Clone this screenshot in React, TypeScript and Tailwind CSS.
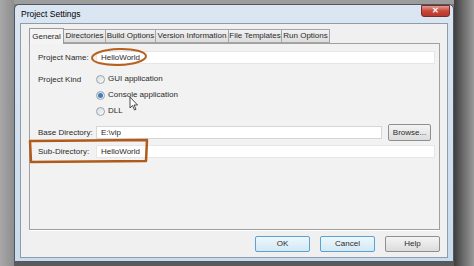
import React from "react";

const font = { fontFamily: '"Liberation Sans", Arial, sans-serif' };

function Radio({ checked, label }: { checked?: boolean; label: string }) {
  return (
    <div className="flex items-center h-[16px]">
      <div className="w-[9px] h-[9px] rounded-full border border-[#9aa4ae] bg-gradient-to-br from-[#d8dde2] to-[#f8f8f8] flex items-center justify-center">
        {checked && <div className="w-[5px] h-[5px] rounded-full bg-[#3d7fc1]" />}
      </div>
      <span className="ml-[3px] text-[8px] text-[#2a2a2a]">{label}</span>
    </div>
  );
}

function Tab({ label, w, active }: { label: string; w: number; active?: boolean }) {
  return (
    <div
      style={{ width: w }}
      className={
        active
          ? "h-[16px] -mb-px border border-b-0 border-[#9a9a9a] bg-[#f4f4f4] text-[8px] text-[#2a2a2a] flex items-center justify-center relative z-10"
          : "h-[14px] border border-l-0 border-[#a5a5a5] bg-gradient-to-b from-[#f2f2f2] to-[#dcdcdc] text-[8px] text-[#2a2a2a] flex items-center justify-center"
      }
    >
      {label}
    </div>
  );
}

function Btn({ label, focus }: { label: string; focus?: boolean }) {
  return (
    <div
      className={
        "w-[55px] h-[16px] rounded-[2px] border text-[8px] text-[#2a2a2a] flex items-center justify-center " +
        (focus
          ? "border-[#5aa2d0] bg-gradient-to-b from-[#eef7fc] to-[#d3e8f5]"
          : "border-[#8e8f8f] bg-gradient-to-b from-[#f4f4f4] to-[#dcdcdc]")
      }
    >
      {label}
    </div>
  );
}

export default function App() {
  return (
    <div
      className="w-[474px] h-[266px] overflow-hidden relative flex bg-[#7a7a7a] text-[#2a2a2a]"
      style={font}
    >
      <div className="w-[14px] h-full bg-gradient-to-r from-[#a8a8a8] to-[#8e8e8e]" />
      <div className="flex flex-col">
        <div className="h-[4px] w-[440px] bg-[#9c9c9c]" />
        {/* dialog */}
        <div className="w-[440px] h-[258px] rounded-t-[5px] border border-[#4d5866] bg-gradient-to-b from-[#dbe6f2] to-[#c9dbec] flex flex-col">
          <div className="h-[18px] flex items-center justify-between pl-[6px] pr-[3px]">
            <span className="text-[8.5px] text-black mt-[1px]">Project Settings</span>
            <div className="w-[29px] h-[12px] -mt-[6px] rounded-b-[3px] border border-[#7a2b2b] bg-gradient-to-b from-[#e09a8c] via-[#c8463a] to-[#b8392c] flex items-center justify-center">
              <span className="text-white text-[8px] font-bold leading-none">✕</span>
            </div>
          </div>
          <div className="flex-1 mx-[5px] mb-[3px] border border-[#8c9cad] bg-[#f0f0f0] pt-[4px] pl-[8px] pr-[8px] flex flex-col">
            <div className="flex items-end">
              <Tab label="General" w={35} active />
              <Tab label="Directories" w={42} />
              <Tab label="Build Options" w={50} />
              <Tab label="Version Information" w={73} />
              <Tab label="File Templates" w={53} />
              <Tab label="Run Options" w={48} />
            </div>
            <div className="w-[411px] h-[187px] border border-[#a0a0a0] bg-[#f2f2f2] shadow-[0_1px_0_#ffffff] relative">
              <div className="pl-[8px] pt-[7px] text-[8px] flex flex-col">
                <div className="flex items-center h-[13px]">
                  <span className="w-[58px]">Project Name:</span>
                  <div className="w-[339px] h-[13px] bg-white border border-[#e6e6e6] flex items-center pl-[4px]">HelloWorld</div>
                </div>
                <div className="flex mt-[7px]">
                  <span className="w-[58px] mt-[3px]">Project Kind</span>
                  <div className="flex flex-col">
                    <Radio label="GUI application" />
                    <Radio label="Console application" checked />
                    <Radio label="DLL" />
                  </div>
                </div>
                <div className="flex items-center mt-[5px]">
                  <span className="w-[58px]">Base Directory:</span>
                  <div className="w-[286px] h-[13px] bg-white border border-[#d6d6d6] flex items-center pl-[4px]">E:\vip</div>
                  <div className="ml-[6px] w-[43px] h-[17px] rounded-[2px] border border-[#8e8f8f] bg-gradient-to-b from-[#f4f4f4] to-[#dcdcdc] flex items-center justify-center">
                    Browse...
                  </div>
                </div>
                <div className="flex items-center mt-[4px]">
                  <span className="w-[58px]">Sub-Directory:</span>
                  <div className="w-[339px] h-[13px] bg-white border border-[#e6e6e6] flex items-center pl-[4px]">HelloWorld</div>
                </div>
              </div>
            </div>
            <div className="flex justify-end gap-[10px] mt-[6px] w-[411px]">
              <Btn label="OK" focus />
              <Btn label="Cancel" focus />
              <Btn label="Help" />
            </div>
          </div>
        </div>
        <div className="h-[4px] w-[440px] bg-[#5a5a5a]" />
      </div>
      <div className="flex-1 h-full bg-gradient-to-r from-[#3e3e3e] via-[#6e6e6e] to-[#9a9a9a]" />

      {/* annotations */}
      <svg className="absolute left-0 top-0 pointer-events-none" width="474" height="266">
        <ellipse cx="119" cy="57" rx="27" ry="8" fill="none" stroke="#b8601e" strokeWidth="2" transform="rotate(-2 119 57)" />
        <path d="M30 141 L147 140 L146 161 L31 162 Z" fill="none" stroke="#b05a1c" strokeWidth="2.5" strokeLinejoin="round" />
        <path d="M130 97 L130 108 L132.5 105.5 L134.5 110 L136 109.3 L134 105 L137.5 105 Z" fill="#fff" stroke="#222" strokeWidth="0.8" />
      </svg>
    </div>
  );
}
